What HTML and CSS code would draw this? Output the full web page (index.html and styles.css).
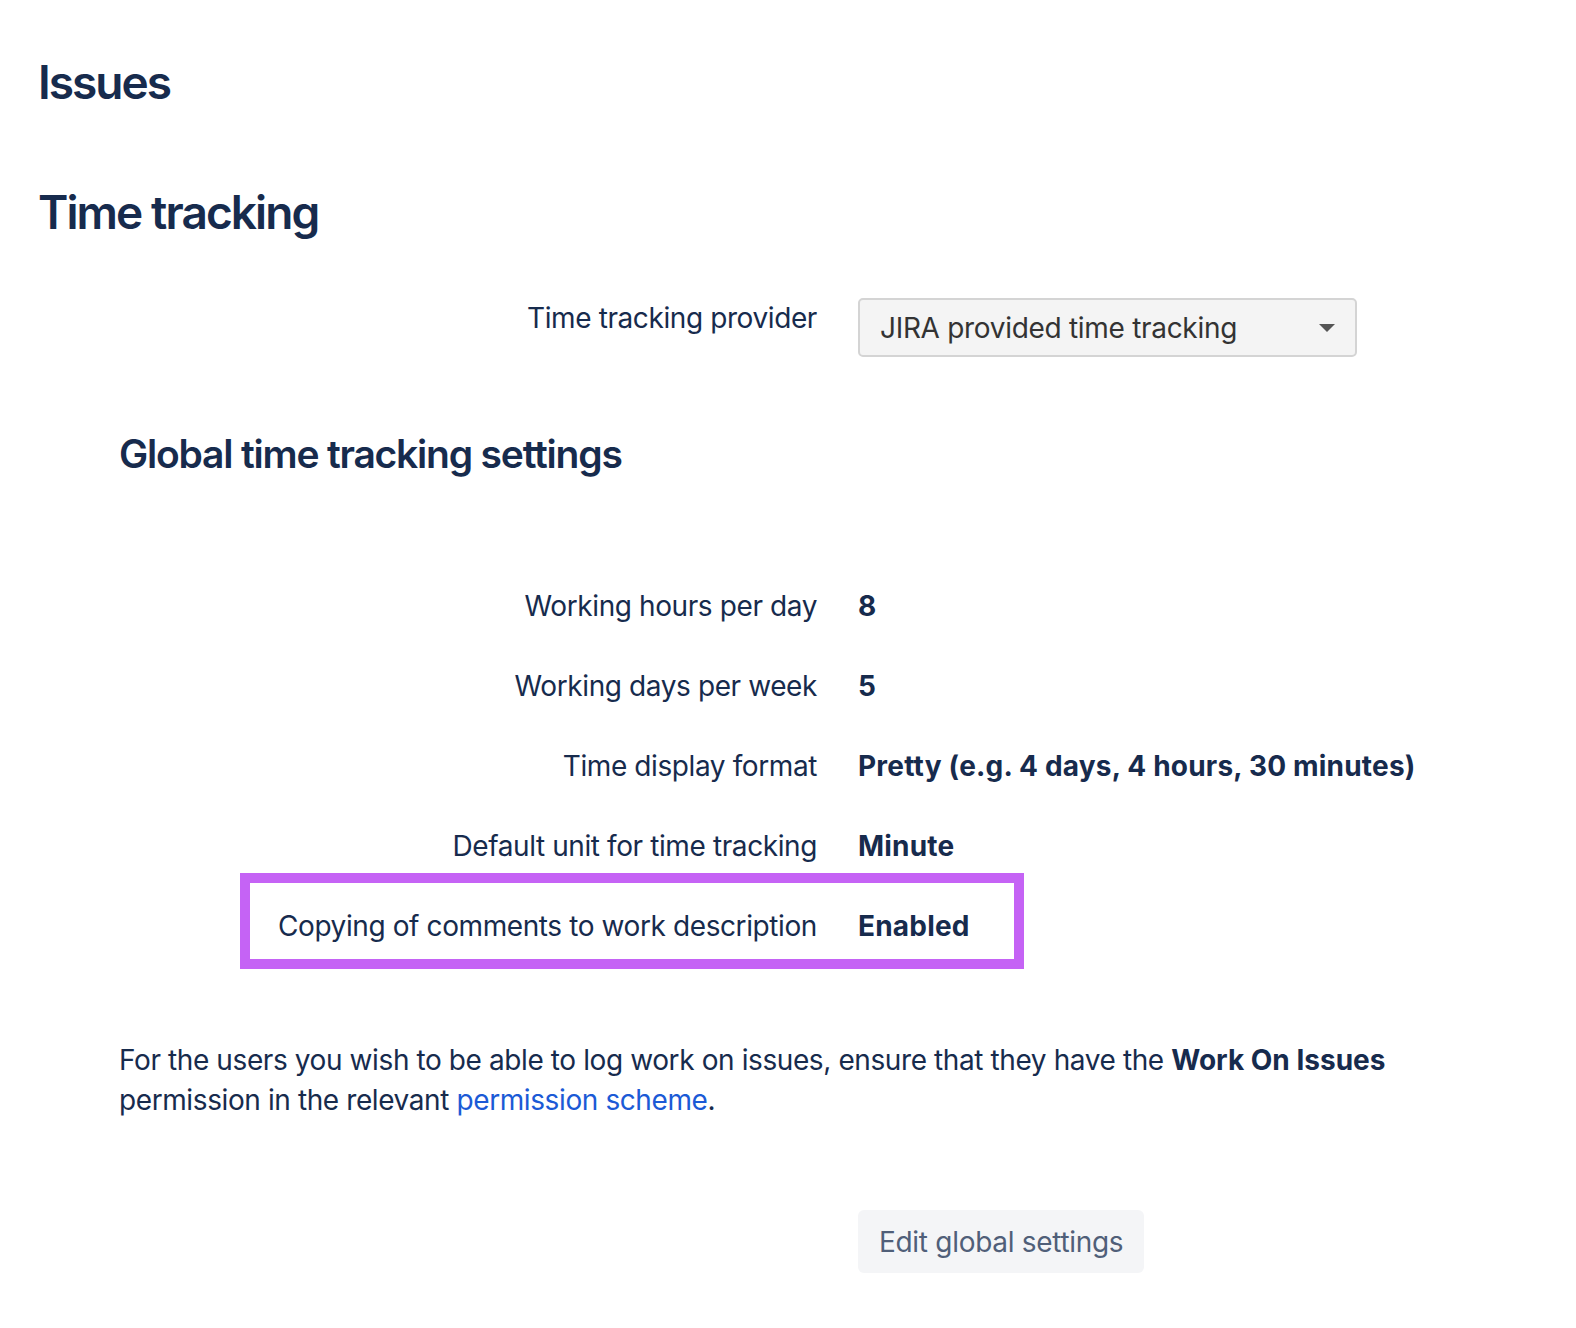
FILE: index.html
```html
<!DOCTYPE html>
<html lang="en">
<head>
<meta charset="utf-8">
<title>Time tracking</title>
<link rel="stylesheet" href="styles.css">
</head>
<body>
<main class="page">
  <h1 class="page-title">Issues</h1>
  <h2 class="section-title">Time tracking</h2>

  <div class="provider-row">
    <label class="provider-label" for="provider">Time tracking provider</label>
    <div class="select" id="provider">
      <span class="select-text">JIRA provided time tracking</span>
      <svg class="select-arrow" width="16" height="8" viewBox="0 0 16 8"><path d="M0 0h16L8 8z" fill="#555"/></svg>
    </div>
  </div>

  <section class="global">
    <h3 class="global-title">Global time tracking settings</h3>
    <dl class="settings">
      <div class="row"><dt>Working hours per day</dt><dd>8</dd></div>
      <div class="row"><dt>Working days per week</dt><dd>5</dd></div>
      <div class="row"><dt>Time display format</dt><dd>Pretty (e.g. 4 days, 4 hours, 30 minutes)</dd></div>
      <div class="row"><dt>Default unit for time tracking</dt><dd>Minute</dd></div>
      <div class="row highlight"><dt>Copying of comments to work description</dt><dd>Enabled</dd></div>
    </dl>
    <p class="note">For the users you wish to be able to log work on issues, ensure that they have the <strong>Work On Issues</strong> permission in the relevant <a href="#">permission scheme</a>.</p>
    <div class="actions">
      <button class="btn" type="button">Edit global settings</button>
    </div>
  </section>
</main>
</body>
</html>
```

FILE: styles.css
```css
* { box-sizing: border-box; }
html, body { margin: 0; padding: 0; background: #fff; }
body {
  font-family: Inter, "Noto Sans", "Liberation Sans", sans-serif;
  color: #172b4d;
  font-size: 28px;
  line-height: 40px;
  letter-spacing: -0.4px;
}
.page { padding: 52px 0 0 38px; }
.page-title {
  margin: 0;
  font-size: 46px;
  line-height: 60px;
  font-weight: 600;
  letter-spacing: -2px;
}
.section-title {
  margin: 70px 0 0;
  font-size: 46px;
  line-height: 60px;
  font-weight: 600;
  letter-spacing: -1.9px;
}
.provider-row {
  display: flex;
  align-items: flex-start;
  margin-top: 56px;
  gap: 41px;
}
.provider-label {
  width: 779px;
  text-align: right;
}
.select {
  width: 499px;
  height: 59px;
  background: #f4f4f4;
  border: 2px solid #d4d4d4;
  border-radius: 5px;
  display: flex;
  align-items: center;
  justify-content: space-between;
  padding: 0 20px;
  color: #333;
  letter-spacing: -0.3px;
}
.select-text { line-height: 40px; }
.select-arrow { display: block; }
.global { padding-left: 81px; }
.global-title {
  margin: 72px 0 0;
  font-size: 39px;
  line-height: 50px;
  font-weight: 600;
  letter-spacing: -1.2px;
}
.settings { margin: 87px 0 0; padding: 0; }
.row {
  display: flex;
  gap: 41px;
  height: 80px;
  align-items: center;
  position: relative;
}
.row dt {
  width: 698px;
  text-align: right;
  margin: 0;
}
.row dd { margin: 0; font-weight: 700; letter-spacing: 0.2px; }
.highlight::after {
  content: "";
  box-sizing: border-box;
  position: absolute;
  left: 121px;
  top: -13px;
  width: 784px;
  height: 96px;
  border: 10px solid #c563f5;
  pointer-events: none;
}
.note {
  margin: 74px 0 0;
  max-width: 1300px;
}
.note strong { font-weight: 700; letter-spacing: 0; }
.note a { color: #1b5ad6; text-decoration: none; }
.actions { margin-top: 90px; padding-left: 739px; }
.btn {
  font: inherit;
  letter-spacing: -0.3px;
  height: 63px;
  padding: 0 21px;
  background: #f4f5f7;
  color: #505f79;
  border: none;
  border-radius: 6px;
}
```
